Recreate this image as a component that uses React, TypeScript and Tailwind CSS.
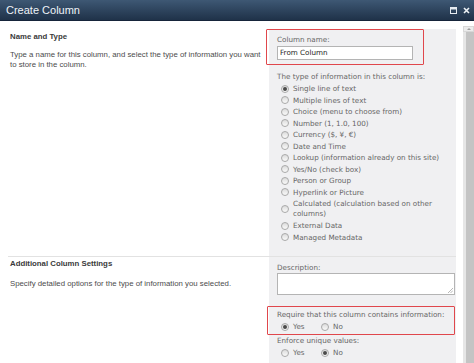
import React from 'react';

const types = [
  'Single line of text',
  'Multiple lines of text',
  'Choice (menu to choose from)',
  'Number (1, 1.0, 100)',
  'Currency ($, ¥, €)',
  'Date and Time',
  'Lookup (information already on this site)',
  'Yes/No (check box)',
  'Person or Group',
  'Hyperlink or Picture',
  'Calculated (calculation based on other columns)',
  'External Data',
  'Managed Metadata',
];

const Radio = ({ checked }: { checked?: boolean }) => (
  <span className="w-[8px] h-[8px] shrink-0 rounded-full border border-[#a9a9a9] bg-gradient-to-b from-[#dcdcdc] to-[#fafafa] flex items-center justify-center">
    {checked && <span className="w-[4px] h-[4px] rounded-full bg-[#4a4a4a]" />}
  </span>
);

const Option = ({ label, checked }: { label: string; checked?: boolean }) => (
  <div className="flex items-center gap-[4px]">
    <Radio checked={checked} />
    <span>{label}</span>
  </div>
);

export default function App() {
  return (
    <div className="w-[474px] h-[363px] overflow-hidden bg-white flex flex-col font-['Liberation_Sans',Arial,sans-serif]">
      {/* title bar */}
      <div className="h-[21px] shrink-0 bg-gradient-to-b from-[#3e5874] to-[#1f3249] flex items-center justify-between pl-[6px] pr-[4px] border-b border-[#16243a]">
        <span className="text-[11px] text-[#eef3f8]">Create Column</span>
        <div className="flex items-center gap-[6px]">
          <svg width="7" height="7" viewBox="0 0 7 7">
            <rect x="0.5" y="0.5" width="6" height="6" fill="none" stroke="#e6ebf0" strokeWidth="1" />
            <rect x="0.5" y="0.5" width="6" height="2" fill="#e6ebf0" />
          </svg>
          <svg width="7" height="7" viewBox="0 0 7 7">
            <path d="M1 1 L6 6 M6 1 L1 6" stroke="#eef2f6" strokeWidth="1.6" />
          </svg>
        </div>
      </div>

      <div className="flex flex-1 min-h-0">
        {/* content */}
        <div className="flex-1 flex flex-col pl-[8px] pt-[8px] pr-[7px]">
          {/* section 1 */}
          <div className="flex h-[227px]">
            <div className="w-[261px] pl-[2px] pt-[3px] text-[7.8px] leading-[10px] text-[#4c4c4c]">
              <div className="font-bold text-[#3a3a3a]">Name and Type</div>
              <div className="mt-[8px] pr-[4px]">
                Type a name for this column, and select the type of information you want to store in the column.
              </div>
            </div>
            <div className="w-[187px] bg-[#f0f0f2] pl-[8px] pr-[8px] pt-[6px] text-[7.2px] leading-[10px] text-[#666] font-['DejaVu_Sans',Verdana,sans-serif]">
              <div className="relative">
                <div className="absolute -left-[11px] -top-[6px] w-[158px] h-[36px] border-[1.5px] border-[#e0474c] rounded-[1px] pointer-events-none" />
                <div>Column name:</div>
                <div className="mt-[1px] w-[136px] h-[14px] bg-white border border-[#b4b4b4] px-[2px] flex items-center text-[#1e1e1e]">
                  From Column
                </div>
              </div>
              <div className="mt-[12px]">The type of information in this column is:</div>
              <div className="pl-[4px] mt-[1px] flex flex-col leading-[11.5px]">
                {types.map((t, i) => (
                  <div key={t} className="flex items-center gap-[4px]">
                    <Radio checked={i === 0} />
                    <span className={i === 10 ? 'leading-[10.5px] w-[150px] py-[0.5px]' : ''}>{t}</span>
                  </div>
                ))}
              </div>
            </div>
          </div>

          {/* section 2 */}
          <div className="flex flex-1 border-t border-[#e2e2e2]">
            <div className="w-[261px] pl-[2px] pt-[2px] text-[7.8px] leading-[10px] text-[#4c4c4c]">
              <div className="font-bold text-[#3a3a3a]">Additional Column Settings</div>
              <div className="mt-[10px]">Specify detailed options for the type of information you selected.</div>
            </div>
            <div className="w-[187px] bg-[#f0f0f2] pl-[8px] pr-[1px] pt-[6px] text-[7.2px] leading-[10px] text-[#666] font-['DejaVu_Sans',Verdana,sans-serif]">
              <div>Description:</div>
              <div className="relative h-[22px] bg-white border border-[#b4b4b4]">
                <svg className="absolute right-[1px] bottom-[1px]" width="5" height="5" viewBox="0 0 5 5">
                  <path d="M5 0 L0 5 M5 2.5 L2.5 5" stroke="#9a9a9a" strokeWidth="0.7" />
                </svg>
              </div>
              <div className="relative mt-[15px]">
                <div className="absolute -left-[10px] right-0 -top-[4px] h-[29px] border-[1.5px] border-[#e0474c] rounded-[1px] pointer-events-none" />
                <div>Require that this column contains information:</div>
                <div className="flex items-center pl-[4px] mt-[1px] leading-[11px]">
                  <div className="w-[40px]"><Option label="Yes" checked /></div>
                  <Option label="No" />
                </div>
              </div>
              <div className="mt-[4px]">Enforce unique values:</div>
              <div className="flex items-center pl-[4px] mt-[1px] leading-[11px]">
                <div className="w-[40px]"><Option label="Yes" /></div>
                <Option label="No" checked />
              </div>
            </div>
          </div>
        </div>

        {/* scrollbar */}
        <div className="w-[11px] shrink-0 pt-[5px] flex flex-col">
          <div className="h-[6px] bg-[#ececec] border border-[#d8d8d8] flex items-center justify-center">
            <div className="w-0 h-0 border-l-[2px] border-r-[2px] border-b-[2px] border-l-transparent border-r-transparent border-b-[#9a9a9a]" />
          </div>
          <div className="flex-1 flex">
            <div className="w-[3px] bg-[#e6e6e6]" />
            <div className="flex-1 bg-[#c4c4c4]" />
          </div>
        </div>
      </div>
    </div>
  );
}
